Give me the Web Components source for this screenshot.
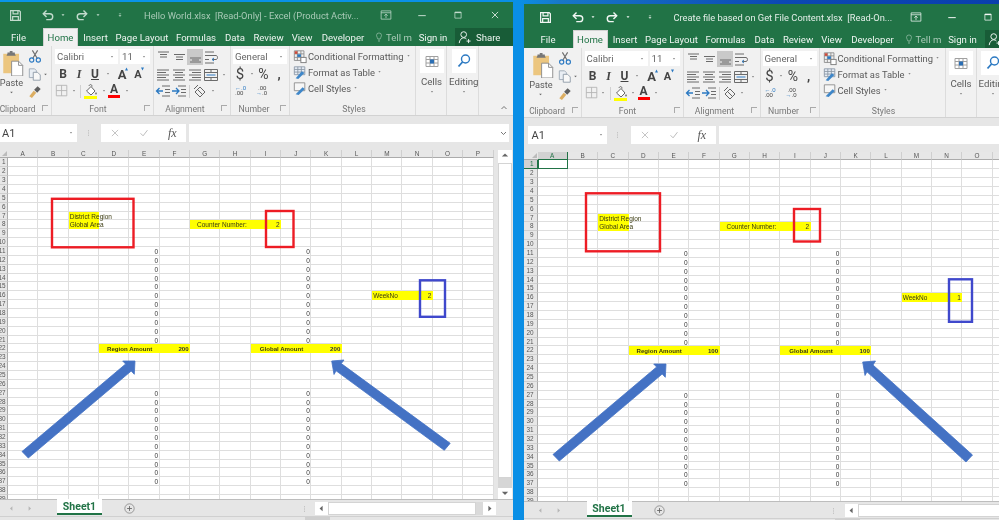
<!DOCTYPE html>
<html>
<head>
<meta charset="utf-8">
<title>Excel windows</title>
<style>
	html, body { margin: 0; height: 100%; overflow: hidden; }
	body { font-family: Roboto, "Liberation Sans", sans-serif; }
</style>
</head>
<body>

<xl-desktop>
	<xl-window id="left" x="-6" y="2" rowpad="1.5" name="Hello World.xlsx  [Read-Only] - Excel (Product Activ..."></xl-window>
	<xl-window id="right" x="523.5" y="4" rowpad="3" active name="Create file based on Get File Content.xlsx  [Read-On..."></xl-window>
	<xl-marks></xl-marks>
</xl-desktop>

<template id="ribbon-template">
	<style>
		:host { display: flex; height: 70px; background: #f1f1f1; border-bottom: 1px solid #d2d2d2; box-sizing: border-box; color: #5a5a5a; font-size: 9.5px; }
		.group { flex: none; box-sizing: border-box; display: grid; grid-template-rows: 1fr 15px; border-right: 1px solid #dcdcdc; padding-top: 3px; position: relative; }
		.body { display: flex; flex-direction: column; gap: 2px; min-width: 0; }
		.label { font-size: 8.7px; line-height: 18px; text-align: center; color: #777; }
		.launch { position: absolute; right: 3px; bottom: 4px; width: 5px; height: 5px; border-left: 1px solid #aaa; border-top: 1px solid #aaa; }
		.row { display: flex; align-items: center; height: 16px; }
		.box { background: #fff; height: 15px; line-height: 15px; box-sizing: border-box; padding-left: 2px; display: flex; align-items: center; justify-content: space-between; padding-right: 3px; color: #666; font-size: 9.6px; }
		.cell { flex: none; width: 16px; height: 16px; display: flex; align-items: center; justify-content: center; position: relative; }
		.tiny { flex: none; width: 9px; display: flex; justify-content: center; }
		.sep { flex: none; width: 1px; height: 13px; background: #d0d0d0; margin: 0 2px; }
		.hot { background: #c9c9c9; }
		.glyph { font-family: "Liberation Serif", serif; font-size: 12px; font-weight: 700; color: #444; }
		.sans { font-family: Roboto, sans-serif; font-weight: 700; }
		.bar { display: block; width: 12px; height: 3px; margin: 0 auto; margin-top: -1px; }
		.tip { position: absolute; right: 1px; top: 1px; width: 5px; height: 4px; color: #2b79c2; }
		.paste { display: flex; }
		.paste-col { width: 34px; display: flex; flex-direction: column; align-items: center; box-sizing: border-box; }
		.paste-col xl-icon:first-child { margin-top: 2px; margin-left: 4px; }
		.paste-col span { font-size: 9.2px; line-height: 12px; margin-top: 1px; margin-left: 1px; }
		.clip-col { display: flex; flex-direction: column; gap: 2px; }
		.style-row { display: flex; align-items: center; gap: 1px; height: 16px; font-size: 9.4px; white-space: nowrap; }
		.big { display: flex; flex-direction: column; align-items: center; }
		.tile { width: 24px; height: 24px; background: #fff; display: flex; align-items: center; justify-content: center; }
		.big span { line-height: 14px; margin-top: 2px; font-size: 9.7px; }
		.num { font: 6px/5.5px "Liberation Sans", sans-serif; display: flex; flex-direction: column; color: #444; width: 13px; flex: none; white-space: nowrap; }
		.collapse { margin-left: 20px; align-self: flex-end; margin-bottom: 3px; }
	</style>
	<div class="group" style="width:58px">
		<div class="paste">
			<div class="paste-col">
				<xl-icon name="paste" w="22" h="25"></xl-icon>
				<span>Paste</span>
				<xl-icon name="caret" w="7" h="7"></xl-icon>
			</div>
			<div class="clip-col">
				<xl-icon name="scissors" w="14" h="15"></xl-icon>
				<div class="row"><xl-icon name="copy" w="14" h="15"></xl-icon><xl-icon name="caret" w="7" h="7"></xl-icon></div>
				<xl-icon name="painter" w="14" h="15"></xl-icon>
			</div>
		</div>
		<div class="label" style="padding-right:10px;font-size:8.4px">Clipboard</div><i class="launch"></i>
	</div>
	<div class="group" style="width:102px;padding-left:3px">
		<div class="body">
			<div class="row" style="gap:2px;height:15px">
				<div class="box" style="width:63px">Calibri<xl-icon name="caret" w="6" h="6"></xl-icon></div>
				<div class="box" style="width:30px">11<xl-icon name="caret" w="6" h="6"></xl-icon></div>
			</div>
			<div class="row">
				<div class="cell glyph sans">B</div><div class="cell glyph" style="font-style:italic">I</div><div class="cell glyph sans" style="text-decoration:underline">U</div><div class="tiny"><xl-icon name="caret" w="6" h="6"></xl-icon></div>
				<div class="cell glyph sans" style="margin-left:2px;font-size:13px">A<xl-icon class="tip" name="tipup" w="5" h="4"></xl-icon></div><div class="cell glyph sans" style="font-size:11px">A<xl-icon class="tip" name="tipdown" w="5" h="4"></xl-icon></div>
			</div>
			<div class="row" style="margin-top:-1px">
				<xl-icon name="border" w="14" h="14"></xl-icon><div class="tiny"><xl-icon name="caret" w="6" h="6"></xl-icon></div>
				<div class="sep"></div>
				<xl-icon name="fill" w="16" h="16"></xl-icon><div class="tiny"><xl-icon name="caret" w="6" h="6"></xl-icon></div>
				<div class="cell glyph sans" style="display:block;text-align:center;line-height:13px;margin-left:-2px">A<b class="bar" style="background:#f00"></b></div><div class="tiny"><xl-icon name="caret" w="6" h="6"></xl-icon></div>
			</div>
		</div>
		<div class="label" style="padding-right:12px">Font</div><i class="launch"></i>
	</div>
	<div class="group" style="width:77px;padding-left:1px">
		<div class="body" style="gap:0">
			<div class="row" style="height:16px">
				<xl-icon name="atop" w="16" h="16"></xl-icon><xl-icon name="amid" w="16" h="16"></xl-icon><div class="cell hot"><xl-icon name="abot" w="16" h="16"></xl-icon></div><xl-icon name="wrap" w="16" h="16"></xl-icon>
			</div>
			<div class="row" style="height:17px;margin-top:1px">
				<xl-icon name="aleft" w="16" h="16"></xl-icon><xl-icon name="acenter" w="16" h="16"></xl-icon><xl-icon name="aright" w="16" h="16"></xl-icon><xl-icon name="merge" w="16" h="16"></xl-icon><div class="tiny"><xl-icon name="caret" w="6" h="6"></xl-icon></div>
			</div>
			<div class="row">
				<xl-icon name="outdent" w="16" h="16"></xl-icon><xl-icon name="indent" w="16" h="16"></xl-icon><div class="sep"></div><xl-icon name="orient" w="16" h="16"></xl-icon><div class="tiny"><xl-icon name="caret" w="6" h="6"></xl-icon></div>
			</div>
		</div>
		<div class="label" style="padding-right:15px">Alignment</div><i class="launch"></i>
	</div>
	<div class="group" style="width:59px;padding-left:2px">
		<div class="body">
			<div class="box" style="width:54px">General<xl-icon name="caret" w="6" h="6"></xl-icon></div>
			<div class="row">
				<div class="cell" style="font-size:15px;color:#444;width:14px">$</div><div class="tiny"><xl-icon name="caret" w="6" h="6"></xl-icon></div><div class="cell" style="font-size:14px;color:#444;width:15px">%</div><div class="cell glyph sans" style="font-size:13px">,</div>
			</div>
			<div class="row" style="padding-left:2px;gap:8px;margin-top:-1px">
				<div class="num"><span style="color:#2b79c2">&#8592;.0</span><span>.00</span></div>
				<div class="num"><span style="padding-left:2px">.00</span><span><b style="color:#2b79c2">&#8594;</b>.0</span></div>
			</div>
		</div>
		<div class="label" style="padding-right:14px">Number</div><i class="launch"></i>
	</div>
	<div class="group" style="width:126px;padding-left:3px">
		<div class="body" style="gap:0;margin-top:-1px">
			<div class="style-row"><xl-icon name="cond" w="14" h="15"></xl-icon>Conditional Formatting<xl-icon name="caret" w="7" h="6"></xl-icon></div>
			<div class="style-row"><xl-icon name="table" w="14" h="15"></xl-icon>Format as Table<xl-icon name="caret" w="7" h="6"></xl-icon></div>
			<div class="style-row"><xl-icon name="cstyle" w="14" h="15"></xl-icon>Cell Styles<xl-icon name="caret" w="7" h="6"></xl-icon></div>
		</div>
		<div class="label">Styles</div>
	</div>
	<div class="group" style="width:31px;padding-left:1px">
		<div class="big"><div class="tile"><xl-icon name="cells" w="16" h="16"></xl-icon></div><span>Cells</span><xl-icon name="caret" w="6" h="6"></xl-icon></div>
		<div class="label"></div>
	</div>
	<div class="group" style="width:32px;padding-left:2px">
		<div class="big"><div class="tile"><xl-icon name="search" w="16" h="16"></xl-icon></div><span>Editing</span><xl-icon name="caret" w="6" h="6"></xl-icon></div>
		<div class="label"></div>
	</div>
	<xl-icon class="collapse" name="chevup" w="10" h="8"></xl-icon>
</template>

<script>
	// all icons on a 16 unit box unless a view is given
	const S = 'fill="none" stroke="currentColor"';
	const L = 'fill="none" stroke="#6b6b6b"';
	const ICONS = {
		caret: '<path d="M5 6h6l-3 3.5z" fill="#666"/>',
		caretw: '<path d="M4 6h8l-4 4.5z" fill="currentColor"/>',
		tipup: '<path d="M8 2l6 12H2z" fill="currentColor"/>',
		tipdown: '<path d="M2 2h12L8 14z" fill="currentColor"/>',
		qat: '<path d="M5 3.5h6" ' + S + ' stroke-width="1.6"/><path d="M4 7h8l-4 4.5z" fill="currentColor"/>',
		save: '<path d="M2 2h10.5L14 3.5V14H2z M5 2v4h6V2 M4.5 14V9.5h7V14" ' + S + ' stroke-width="1.5"/>',
		undo: '<path d="M3 6.5h7a3.4 3.4 0 0 1 0 6.8H6" ' + S + ' stroke-width="1.6"/><path d="M6.3 2.8L2.6 6.5l3.7 3.7" ' + S + ' stroke-width="1.6"/>',
		redo: '<path d="M13 6.5H6a3.4 3.4 0 0 0 0 6.8h4" ' + S + ' stroke-width="1.6"/><path d="M9.7 2.8l3.7 3.7-3.7 3.7" ' + S + ' stroke-width="1.6"/>',
		display: '<path d="M1.5 2.5h13v11h-13z M1.5 5h13 M8 12V6.8 M5.8 9L8 6.8 10.2 9" ' + S + '/>',
		min: '<path d="M2 9h12" ' + S + ' stroke-width="1.6"/>',
		max: '<path d="M3 3.5h10v9.5H3z" ' + S + ' stroke-width="1.2"/><path d="M3 4h10" ' + S + ' stroke-width="2"/>',
		close: '<path d="M3 3l10 10M13 3L3 13" ' + S + ' stroke-width="1.6"/>',
		bulb: '<path d="M6 11c0-2-2-3-2-5.5a4 4 0 0 1 8 0C12 8 10 9 10 11z M6.5 13h3 M7 15h2" ' + S + '/>',
		person: '<circle cx="7" cy="5" r="3.5" ' + S + ' stroke-width="1.2"/><path d="M1.5 15.5c.4-4 2.8-6.5 5.5-6.5 1.4 0 2.5.5 3.4 1.4 M10.5 13h5 M13 10.5v5" ' + S + ' stroke-width="1.2"/>',
		paste: '<rect x="0.5" y="3" width="17" height="21" fill="#ecc67f"/><path d="M5 3V1.5h2.5V0h3v1.5H13V3l1 2H4z" fill="#777"/><path d="M9.5 11h7.5l4.5 4.5V27h-12z" fill="#fff" stroke="#8a8a8a"/><path d="M17 11v4.5h4.5" fill="none" stroke="#8a8a8a"/>',
		scissors: '<path d="M5 1l5.5 9M11 1L5.5 10" fill="none" stroke="#6d6d6d" stroke-width="1.3"/><circle cx="4.2" cy="12" r="2.4" fill="none" stroke="#2b79c2" stroke-width="1.3"/><circle cx="11.8" cy="12" r="2.4" fill="none" stroke="#2b79c2" stroke-width="1.3"/>',
		copy: '<path d="M1.5 1.5h6l2 2v8h-8z" fill="#e9eef4" stroke="#9aa7b5"/><path d="M6 5.5h5l3 3v6H6z" fill="#f8f8f8" stroke="#8a97a5"/>',
		painter: '<path d="M1.5 13.5l5-6.5 3 2.5-5 6z" fill="#dcae62"/><path d="M7 6l4-4 3.5 3-4 4.5z" fill="#5f5f5f"/>',
		border: '<path d="M1.5 1.5h12v12h-12z M7.5 1.5v12 M1.5 7.5h12" fill="none" stroke="#b4b4b4"/>',
		fill: '<path d="M3.5 8L8 3.5 12 8l-4 4z" fill="#fff" stroke="#666"/><path d="M6 3c.5-2 3-2 3 .5" fill="none" stroke="#666"/><path d="M13 9c1 1.3 1 2.5 0 2.5s-1-1.2 0-2.5z" fill="#555"/><rect x="1" y="13" width="13" height="3" fill="#ff0"/>',
		atop: '<path d="M3 3h11M5 5.5h7M5 8h7" ' + L + '/>',
		amid: '<path d="M3 5.5h11M5 8h7M5 10.5h7" ' + L + '/>',
		abot: '<path d="M3 9h11M5 11h7M3 13h11" ' + L + '/>',
		wrap: '<path d="M2 3h9M2 6.5h11c2 0 2 4 0 4H9M2 10.5h4M2 14h9" fill="none" stroke="#6b6b6b"/><path d="M11 9l-2 1.5 2 1.5" fill="none" stroke="#2b79c2"/>',
		aleft: '<path d="M2 3h12M2 5.5h9M2 8h12M2 10.5h9M2 13h12" ' + L + '/>',
		acenter: '<path d="M2 3h12M4 5.5h8M2 8h12M4 10.5h8M2 13h12" ' + L + '/>',
		aright: '<path d="M2 3h12M5 5.5h9M2 8h12M5 10.5h9M2 13h12" ' + L + '/>',
		merge: '<path d="M1.5 2.5h13v11h-13z M8 2.5v3 M8 10.5v3 M1.5 5.5h13 M1.5 10.5h13" ' + L + '/><path d="M3.5 8h9" fill="none" stroke="#2b79c2"/>',
		outdent: '<path d="M7 3h8M7 13h8M10 6.5h5M10 9.5h5" ' + L + '/><path d="M1.5 8H8M4.5 5L1.5 8l3 3" fill="none" stroke="#2b79c2" stroke-width="1.3"/>',
		indent: '<path d="M7 3h8M7 13h8M10 6.5h5M10 9.5h5" ' + L + '/><path d="M1 8h7M5 5l3 3-3 3" fill="none" stroke="#2b79c2" stroke-width="1.3"/>',
		orient: '<path d="M3 9l5-5 5 5-5 5z M5.5 6.5L11 12 M2 6l4-4" fill="none" stroke="#666"/>',
		cond: '<path d="M1.5 1.5h11v11h-11z M5 1.5v11 M9 1.5v11 M1.5 5h11 M1.5 9h11" fill="none" stroke="#8a8a8a"/><rect x="2" y="2" width="3" height="3" fill="#d04a3a"/><rect x="5" y="5.5" width="4" height="3" fill="#2b79c2"/><rect x="9" y="9" width="6" height="6" fill="#fff" stroke="#777"/>',
		table: '<path d="M1.5 1.5h12v9h-12z M1.5 4.5h12 M1.5 7.5h12 M5.5 1.5v9 M9.5 1.5v9" fill="#e6edf5" stroke="#8a97a5"/><path d="M3 14.5l7-8 3 2-7 7z" fill="#3f87c9"/>',
		cstyle: '<path d="M1.5 1.5h12v9h-12z" fill="#f6f6f6" stroke="#8a8a8a"/><path d="M3 14.5l8-8 2.5 2-7 7z" fill="#3f87c9"/>',
		cells: '<path d="M2 3.5h12v10H2z M2 6.5h12 M6 3.5v10 M10 3.5v10 M2 10h12" fill="none" stroke="#a0a0a0"/><rect x="6" y="6.5" width="4" height="4" fill="#2b6fb5"/>',
		search: '<circle cx="9.5" cy="6" r="4" fill="none" stroke="#2b79c2" stroke-width="1.4"/><path d="M6.5 9L2.5 13.5" stroke="#2b79c2" stroke-width="1.8"/>',
		chevup: '<path d="M3 10l5-5 5 5" fill="none" stroke="#555" stroke-width="1.6"/>',
		chevdown: '<path d="M3 6l5 5 5-5" fill="none" stroke="#555" stroke-width="1.6"/>',
		cross: '<path d="M3 3l10 10M13 3L3 13" fill="none" stroke="#bdbdbd" stroke-width="1.4"/>',
		check: '<path d="M2.5 8.5l4 4 7-9" fill="none" stroke="#bdbdbd" stroke-width="1.6"/>',
		plus: '<circle cx="8" cy="8" r="6.8" fill="none" stroke="#777"/><path d="M4.5 8h7M8 4.5v7" stroke="#666" stroke-width="1.3"/>',
		left: '<path d="M10 3v10L4.5 8z" fill="currentColor"/>',
		right: '<path d="M6 3v10l5.5-5z" fill="currentColor"/>',
		up: '<path d="M3 10.5h10L8 5.5z" fill="currentColor"/>',
		down: '<path d="M3 6h10l-5 5z" fill="currentColor"/>',
		dots: '<path d="M8 2v2M8 7v2M8 12v2" stroke="#999" stroke-width="1.6"/>'
	};

	class XlIcon extends HTMLElement {
		connectedCallback() {
			const w = this.getAttribute('w') || 16;
			const h = this.getAttribute('h') || 16;
			const name = this.getAttribute('name');
			const view = name === 'paste' ? '0 0 22 27' : '0 0 16 16';
			this.attachShadow({mode: 'open'}).innerHTML =
				`<style>:host{display:block;flex:none;width:${w}px;height:${h}px}svg{display:block;width:100%;height:100%}</style>` +
				`<svg viewBox="${view}" preserveAspectRatio="xMidYMid meet">${ICONS[name]}</svg>`;
		}
	}
	customElements.define('xl-icon', XlIcon);

	class XlDesktop extends HTMLElement {
		connectedCallback() {
			this.attachShadow({mode: 'open'}).innerHTML = `<style>
				:host{display:block;position:relative;width:999px;height:520px;overflow:hidden;
					background:linear-gradient(90deg,#0a96ea 0,#0a8fe6 52%,#1878c8 56%,#0c48b4 78%,#0a3fae 100%)}
			</style><slot></slot>`;
		}
	}
	customElements.define('xl-desktop', XlDesktop);

	class XlRibbon extends HTMLElement {
		connectedCallback() {
			const root = this.attachShadow({mode: 'open'});
			root.appendChild(document.querySelector('#ribbon-template').content.cloneNode(true));
		}
	}
	customElements.define('xl-ribbon', XlRibbon);

	class XlCell extends HTMLElement {
		connectedCallback() {
			const col = +this.getAttribute('col');
			const row = +this.getAttribute('row');
			const span = +this.getAttribute('span') || 1;
			this.style.gridColumn = (col + 1) + ' / span ' + span;
			this.style.gridRow = String(row + 1);
			const pad = this.getAttribute('pad') || 1;
			this.attachShadow({mode: 'open'}).innerHTML = `<style>
				:host{display:block;min-width:0;white-space:nowrap;font:6.5px/10.5px "Liberation Sans",sans-serif;color:#333;box-sizing:border-box;padding:0 1.5px 0 ${pad}px;position:relative}
				:host([fill]){background:#ff0;color:#3a3a10}
				:host([end]){text-align:right;}
				:host([bold]){font-weight:700;font-size:6.1px}
			</style><slot></slot>`;
		}
	}
	customElements.define('xl-cell', XlCell);

	const LETTERS = 'ABCDEFGHIJKLMNOP';

	class XlSheet extends HTMLElement {
		connectedCallback() {
			const active = this.hasAttribute('active');
			const rowpad = this.getAttribute('rowpad') || 3;
			let lines = '';
			for (let c = 0; c < 16; c++) {
				const on = active && c === 0 ? ' on' : '';
				lines += `<div class="colhead${on}" style="grid-column:${c + 2};grid-row:1">${LETTERS[c]}</div>`;
				lines += `<div class="vline" style="grid-column:${c + 2};grid-row:2 / -1"></div>`;
			}
			for (let r = 1; r <= 39; r++) {
				const on = active && r === 1 ? ' on' : '';
				lines += `<div class="rowhead${on}" style="grid-column:1;grid-row:${r + 1}">${r}</div>`;
				lines += `<div class="hline" style="grid-column:2 / -1;grid-row:${r + 1}"></div>`;
			}
			const select = active ? '<div class="sel" style="grid-column:2;grid-row:2"></div>' : '';
			this.attachShadow({mode: 'open'}).innerHTML = `<style>
				:host{display:block;height:349px;overflow:hidden;background:#fff;font-family:"Liberation Sans",sans-serif}
				.grid{display:grid;grid-template-columns:14px repeat(16,30.35px);grid-template-rows:8.4px repeat(39,8.87px)}
				.colhead{background:#e7e7e7;border-right:1px solid #cfcfcf;border-bottom:1px solid #ababab;box-sizing:border-box;font-size:6.4px;line-height:7.4px;text-align:center;color:#555}
				.rowhead{background:#e7e7e7;border-right:1px solid #ababab;border-bottom:1px solid #cfcfcf;box-sizing:border-box;font-size:6.4px;line-height:8px;text-align:right;padding-right:${rowpad}px;color:#555}
				.on{background:#d2d2d2;color:#217346;border-color:#217346}
				.vline{border-right:1px solid #dedede;box-sizing:border-box}
				.hline{border-bottom:1px solid #dedede;box-sizing:border-box}
				.corner{grid-column:1;grid-row:1;background:#e7e7e7;position:relative;border-bottom:1px solid #ababab;box-sizing:border-box}
				.corner i{position:absolute;right:1px;bottom:1px;border-style:solid;border-width:0 0 5px 5px;border-color:transparent transparent #bbb transparent}
				.sel{border:1px solid #217346;margin:-1px 0 0 0;z-index:2}
			</style><div class="grid"><div class="corner"><i></i></div>${lines}${select}<slot></slot></div>`;
		}
	}
	customElements.define('xl-sheet', XlSheet);

	class XlWindow extends HTMLElement {
		connectedCallback() {
			const name = this.getAttribute('name');
			const active = this.hasAttribute('active');
			const ink = active ? '#f2f7f4' : '#c3dbcd';
			this.style.left = this.getAttribute('x') + 'px';
			this.style.top = this.getAttribute('y') + 'px';
			this.attachShadow({mode: 'open'}).innerHTML = `<style>
				:host{display:block;position:absolute;width:519px;height:518px;overflow:hidden;background:#e6e6e6;font-size:9.6px;filter:blur(.35px)}
				.title{height:26px;background:#217346;color:${ink};display:flex;align-items:center;white-space:pre;box-sizing:border-box}
				.title .name{flex:none;width:232px;margin-left:21px;font-size:9.3px;white-space:pre;color:${active ? '#e4efe9' : '#a9cab7'}}
				.tabs{height:18px;background:#217346;color:#eef5f1;display:flex;white-space:nowrap;font-size:9.6px}
				.tab{flex:none;text-align:center;line-height:19px}
				.tab.on{background:#f1f1f1;color:#217346;border:1px solid #d2d2d2;border-bottom:0;box-sizing:border-box;line-height:18px}
				.tell{display:flex;align-items:center;gap:2px;width:44px;color:#a9cab7;flex:none;margin-left:4px}
				.share{margin-left:auto;width:58px;background:#185c37;display:flex;align-items:center;gap:5px;padding-left:3px;box-sizing:border-box}
				.formula{height:34px;display:flex;align-items:center;box-sizing:border-box;color:#555}
				.name-box{flex:none;margin-left:4px;width:79px;height:18px;background:#fff;display:flex;justify-content:space-between;align-items:center;padding:0 3px 0 4px;box-sizing:border-box;font-size:11px;color:#444}
				.btns{flex:none;margin-left:9.5px;width:85px;height:18px;background:#fff;display:flex;align-items:center;padding-left:9px;box-sizing:border-box}
				.btns > *{margin-right:19px}
				.fx{font:italic 12px "Liberation Serif",serif;color:#555}
				.input{flex:none;margin-left:3px;width:320px;height:18px;background:#fff;display:flex;justify-content:flex-end;align-items:center;padding-right:1.5px;box-sizing:border-box}
				.main{display:flex;height:349px}
				xl-sheet{flex:none;width:499.6px}
				.vbar{flex:1;display:flex;flex-direction:column;padding-left:4px;box-sizing:border-box;background:#e6e6e6;color:#666;width:19px}
				.vbar div{width:14px;background:#fff;flex:none;display:flex;justify-content:center}
				.vbar .up{height:13px}.vbar .thumb{height:315px;margin:0;border:1px solid #d4d4d4;box-sizing:border-box}
				.vbar .track{background:#d6d6d6;height:10px}.vbar .down{height:11px}
				.bottom{height:17px;background:#e6e6e6;border-top:1px solid #bdbdbd;box-sizing:border-box;display:flex;color:#b6b6b6}
				.nav{flex:none;width:63px;display:flex;padding-left:13.5px;gap:11px;align-items:center;box-sizing:border-box}
				.sheet{flex:none;width:45px;height:16px;margin-top:-1px;background:#fff;border-bottom:2px solid #217346;box-sizing:border-box;color:#217346;font:700 10.5px/15px Roboto,sans-serif;text-align:center}
				.plus{flex:none;margin-left:22px}
				.split{flex:none;margin-left:165.5px;display:flex;align-items:center;margin-top:1px}
				.hbtn{flex:none;width:13px;height:13px;background:#fff;color:#666;display:flex;align-items:center;justify-content:center}
				.hthumb{flex:none;width:148px;height:13px;background:#fff;border:1px solid #d4d4d4;box-sizing:border-box}
				.htrack{flex:none;width:7px;height:13px;background:#dadada}
				.status{height:4px;background:#e6e6e6;border-top:1px solid #d0d0d0;box-sizing:border-box;padding-left:311px}
				.status i{display:block;width:25px;height:3px;background:#cfcfcf}
			</style>
			<div class="title">
				<xl-icon name="save" w="13" h="13" style="margin-left:15px"></xl-icon>
				<xl-icon name="undo" w="14" h="14" style="margin-left:19px"></xl-icon>
				<xl-icon name="caretw" w="6" h="6" style="margin-left:5px"></xl-icon>
				<xl-icon name="redo" w="14" h="14" style="margin-left:9px"></xl-icon>
				<xl-icon name="caretw" w="6" h="6" style="margin-left:6px"></xl-icon>
				<xl-icon name="qat" w="6" h="7" style="margin-left:16px"></xl-icon>
				<span class="name">${name}</span>
				<xl-icon name="display" w="12" h="12" style="margin-left:4px"></xl-icon>
				<xl-icon name="min" w="10" h="10" style="margin-left:25px"></xl-icon>
				<xl-icon name="max" w="10" h="10" style="margin-left:26px"></xl-icon>
				<xl-icon name="close" w="10" h="10" style="margin-left:27px"></xl-icon>
			</div>
			<div class="tabs">
				<div class="tab" style="width:49px">File</div>
				<div class="tab on" style="width:35px">Home</div>
				<div class="tab" style="width:35px">Insert</div>
				<div class="tab" style="width:58px">Page Layout</div>
				<div class="tab" style="width:50px">Formulas</div>
				<div class="tab" style="width:28px">Data</div>
				<div class="tab" style="width:39px">Review</div>
				<div class="tab" style="width:28px">View</div>
				<div class="tab" style="width:54px">Developer</div>
				<div class="tell"><xl-icon name="bulb" w="10" h="12"></xl-icon>Tell m</div>
				<div class="tab" style="width:30px">Sign in</div>
				<div class="share"><xl-icon name="person" w="13" h="14"></xl-icon>Share</div>
			</div>
			<xl-ribbon></xl-ribbon>
			<div class="formula">
				<div class="name-box">A1<xl-icon name="caret" w="6" h="6"></xl-icon></div>
				<xl-icon name="dots" w="7" h="10" style="margin-left:7.5px"></xl-icon>
				<div class="btns"><xl-icon name="cross" w="10" h="10"></xl-icon><xl-icon name="check" w="10" h="10"></xl-icon><span class="fx">fx</span></div>
				<div class="input"><xl-icon name="chevdown" w="9" h="8"></xl-icon></div>
			</div>
			<div class="main">
				<xl-sheet rowpad="${this.getAttribute('rowpad')}" ${active ? 'active' : ''}><slot></slot></xl-sheet>
				<div class="vbar"><div class="up"><xl-icon name="up" w="10" h="10"></xl-icon></div><div class="thumb"></div><div class="track"></div><div class="down"><xl-icon name="down" w="10" h="10"></xl-icon></div></div>
			</div>
			<div class="bottom">
				<div class="nav"><xl-icon name="left" w="7" h="7"></xl-icon><xl-icon name="right" w="7" h="7"></xl-icon></div>
				<div class="sheet">Sheet1</div>
				<xl-icon class="plus" name="plus" w="11" h="11" style="margin-top:3px"></xl-icon>
				<div class="split"><xl-icon name="dots" w="7" h="10"></xl-icon><span style="width:7.5px"></span><div class="hbtn"><xl-icon name="left" w="9" h="9"></xl-icon></div><div class="hthumb"></div><div class="htrack"></div><div class="hbtn"><xl-icon name="right" w="9" h="9"></xl-icon></div></div>
			</div>
			<div class="status"><i></i></div>`;
		}
	}
	customElements.define('xl-window', XlWindow);

	// red and blue boxes and the arrows someone drew over the screenshot
	const BOXES = [
		[52, 198.8, 81.5, 48.5, '#ed1c24'], [266, 211, 27.5, 36, '#ed1c24'], [420, 280.3, 25, 36.5, '#3f48cc'],
		[586, 193.3, 74, 58, '#ed1c24'], [794, 209, 26, 32.5, '#ed1c24'], [949, 279.3, 23, 42.5, '#3f48cc']
	];
	const ARROWS = [
		'22,451.5 125.6,364 122.7,361 135,361 134.3,374.3 131.2,371 28.3,458',
		'450.2,443.3 341.3,363.6 344,360 331.7,361 334,374.5 336.1,370.8 444.3,450.3',
		'553,454.5 656.6,367 653.7,364 666,364 665.3,377.3 662.2,374 559.3,461',
		'972.5,455 873,365 875.5,361 862.7,362 865,375.5 867,371.8 966,462'
	];

	class XlMarks extends HTMLElement {
		connectedCallback() {
			const boxes = BOXES.map(b => `<rect x="${b[0]}" y="${b[1]}" width="${b[2]}" height="${b[3]}" fill="none" stroke="${b[4]}" stroke-width="2.4"/>`).join('');
			const arrows = ARROWS.map(p => `<polygon points="${p}" fill="#4472c4" stroke="#4472c4" stroke-width=".8"/>`).join('');
			this.attachShadow({mode: 'open'}).innerHTML = `<style>
				:host{display:block;position:absolute;left:0;top:0;width:999px;height:520px;pointer-events:none;filter:blur(.3px)}
				svg{display:block}
			</style><svg width="999" height="520" viewBox="0 0 999 520">${boxes}${arrows}</svg>`;
		}
	}
	customElements.define('xl-marks', XlMarks);

	// sheet content, same cells in both files apart from the totals and the week number
	function fillSheet(win, total, week) {
		const cell = (col, row, text, attrs) => {
			const el = document.createElement('xl-cell');
			el.setAttribute('col', col);
			el.setAttribute('row', row);
			for (const k in attrs || {}) el.setAttribute(k, attrs[k]);
			el.textContent = text;
			win.appendChild(el);
		};
		cell(3, 7, 'District Region', {fill: ''});
		cell(3, 8, 'Global Area', {fill: ''});
		cell(7, 8, 'Counter Number:', {fill: '', span: 3, pad: 7});
		cell(9, 8, '2', {end: ''});
		cell(13, 16, 'WeekNo', {fill: '', span: 2});
		cell(14, 16, week, {end: ''});
		cell(4, 22, 'Region Amount', {fill: '', span: 3, bold: '', pad: 8});
		cell(6, 22, total, {end: '', bold: ''});
		cell(9, 22, 'Global Amount', {fill: '', span: 3, bold: '', pad: 9});
		cell(11, 22, total, {end: '', bold: ''});
		for (const col of [5, 10]) {
			for (let r = 11; r <= 37; r++) {
				if (r >= 22 && r <= 26) continue;
				cell(col, r, '0', {end: ''});
			}
		}
	}
	fillSheet(document.querySelector('#left'), '200', '2');
	fillSheet(document.querySelector('#right'), '100', '1');
</script>
</body>
</html>
